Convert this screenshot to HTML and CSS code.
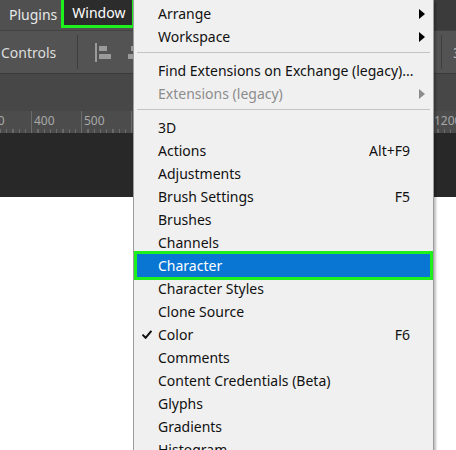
FILE: index.html
```html
<!DOCTYPE html>
<html lang="en">
<head>
	<meta charset="UTF-8">
	<title>Window menu</title>
	<link rel="stylesheet" href="styles.css">
</head>
<body>
	<div class="app">
		<div class="menubar">
			<span class="mb-item">Plugins</span>
			<span class="mb-item mb-active">Window</span>
			<span class="mb-rest"></span>
		</div>
		<div class="options">
			<span class="opt-label">Controls</span>
			<span class="opt-divider"></span>
			<svg class="opt-icon" width="17" height="19" viewBox="0 0 17 19">
				<rect x="0" y="0" width="2" height="19" fill="#9a9a9a"/>
				<rect x="4" y="3" width="8" height="5" fill="#9a9a9a"/>
				<rect x="4" y="11" width="12" height="5" fill="#9a9a9a"/>
			</svg>
			<svg class="opt-icon" width="15" height="19" viewBox="0 0 15 19">
				<rect x="6.5" y="0" width="2" height="19" fill="#9a9a9a"/>
				<rect x="3" y="3" width="9" height="5" fill="#9a9a9a"/>
				<rect x="0" y="11" width="15" height="5" fill="#9a9a9a"/>
			</svg>
			<span class="opt-spacer"></span>
			<span class="opt-divider"></span>
			<span class="opt-label opt-cut">3</span>
		</div>
		<div class="tabs"></div>
		<div class="ruler">
			<span class="tick">300</span>
			<span class="tick">400</span>
			<span class="tick">500</span>
			<span class="tick">600</span>
			<span class="tick">700</span>
			<span class="tick">800</span>
			<span class="tick">900</span>
			<span class="tick">1000</span>
			<span class="tick">1100</span>
			<span class="tick">1200</span>
		</div>
		<div class="canvas"></div>
		<div class="paper"></div>
	</div>

	<div class="menu">
		<div class="item">Arrange<span class="arrow"></span></div>
		<div class="item">Workspace<span class="arrow"></span></div>
		<div class="sep"></div>
		<div class="item">Find Extensions on Exchange (legacy)...</div>
		<div class="item disabled">Extensions (legacy)<span class="arrow"></span></div>
		<div class="sep"></div>
		<div class="item">3D</div>
		<div class="item">Actions<span class="key">Alt+F9</span></div>
		<div class="item">Adjustments</div>
		<div class="item">Brush Settings<span class="key">F5</span></div>
		<div class="item">Brushes</div>
		<div class="item">Channels</div>
		<div class="item selected">Character</div>
		<div class="item">Character Styles</div>
		<div class="item">Clone Source</div>
		<div class="item">
			<svg class="check" width="10" height="9" viewBox="0 0 10 9">
				<path d="M0.5 4.6 L3.6 7.8 L9.4 0.8" fill="none" stroke="#111" stroke-width="2"/>
			</svg>
			Color<span class="key">F6</span>
		</div>
		<div class="item">Comments</div>
		<div class="item">Content Credentials (Beta)</div>
		<div class="item">Glyphs</div>
		<div class="item">Gradients</div>
		<div class="item">Histogram</div>
	</div>
</body>
</html>
```

FILE: styles.css
```css
html, body{
	margin: 0;
	padding: 0;
	background: #fff;
	overflow: hidden;
}
body{
	width: 456px;
	height: 450px;
	position: relative;
	font-family: "Noto Sans", "Open Sans", sans-serif;
	font-size: 14px;
}
.app{
	display: flex;
	flex-direction: column;
	height: 450px;
	overflow: hidden;
}

/* menu bar */
.menubar{
	height: 30px;
	display: flex;
	align-items: stretch;
	background: #505050;
	color: #e8e8e8;
}
.mb-item{
	display: flex;
	align-items: center;
	padding: 0 4px 0 9px;
	height: 28px;
}
.mb-active{
	padding: 0 7px 0 8px;
	background: #2c2c2c;
	color: #fff;
	border: 3px solid #1ef01e;
	border-top: 0;
	height: 25px;
}
.mb-rest{
	margin-left: auto;
	width: 22px;
	background: #3b3b3b;
}

/* options bar */
.options{
	height: 42px;
	display: flex;
	align-items: center;
	background: #535353;
	border-top: 1px solid #444;
	color: #dedede;
}
.opt-label{
	padding-left: 1px;
}
.opt-divider{
	width: 1px;
	height: 34px;
	background: #3e3e3e;
	margin-left: 21px;
}
.opt-icon{
	margin-left: 17px;
}
.opt-icon + .opt-icon{
	margin-left: 16px;
}
.opt-spacer{
	flex: 1;
}
.opt-cut{
	margin-left: 10px;
	margin-right: -5px;
	color: #bdbdbd;
}

.tabs{
	height: 37px;
	background: #474747;
	border-top: 1px solid #3a3a3a;
}

/* ruler */
.ruler{
	height: 22px;
	display: flex;
	margin-left: -19px;
	background-color: #4c4c4c;
	background-image: repeating-linear-gradient(90deg, #6a6a6a 0 1px, transparent 1px 6.25px);
	background-size: 100% 4px;
	background-position: 19px bottom;
	background-repeat: no-repeat;
	color: #a8a8a8;
	font-size: 12px;
}
.tick{
	flex: 0 0 50px;
	box-sizing: border-box;
	border-left: 1px solid #6c6c6c;
	padding: 1px 0 0 2px;
	line-height: 18px;
}

.canvas{
	height: 64px;
	background: #282828;
}
.paper{
	flex: 1;
	background: #fff;
}

/* dropdown */
.menu{
	position: absolute;
	left: 133px;
	top: 0;
	width: 301px;
	height: 456px;
	padding-top: 2px;
	box-sizing: border-box;
	background: #f0f0f0;
	border-left: 1px solid #9c9c9c;
	border-right: 1px solid #9c9c9c;
	box-shadow: 2px 2px 2px rgba(0, 0, 0, 0.25);
	color: #111;
}
.item{
	position: relative;
	height: 23px;
	line-height: 23px;
	margin: 0 3px;
	padding-left: 21px;
	white-space: nowrap;
}
.item.disabled{
	color: #8c8c8c;
}
.item.selected{
	background: #0a76d4;
	color: #fff;
	outline: 3px solid #1ef01e;
}
.key{
	position: absolute;
	right: 20px;
	top: 0;
}
.arrow{
	position: absolute;
	right: 5px;
	top: 7px;
	width: 0;
	height: 0;
	border-top: 5px solid transparent;
	border-bottom: 5px solid transparent;
	border-left: 6px solid #000;
}
.disabled .arrow{
	border-left-color: #8c8c8c;
}
.check{
	position: absolute;
	left: 5px;
	top: 7px;
}
.sep{
	height: 1px;
	margin: 4px 3px 6px;
	background: #c4c4c4;
}
```
